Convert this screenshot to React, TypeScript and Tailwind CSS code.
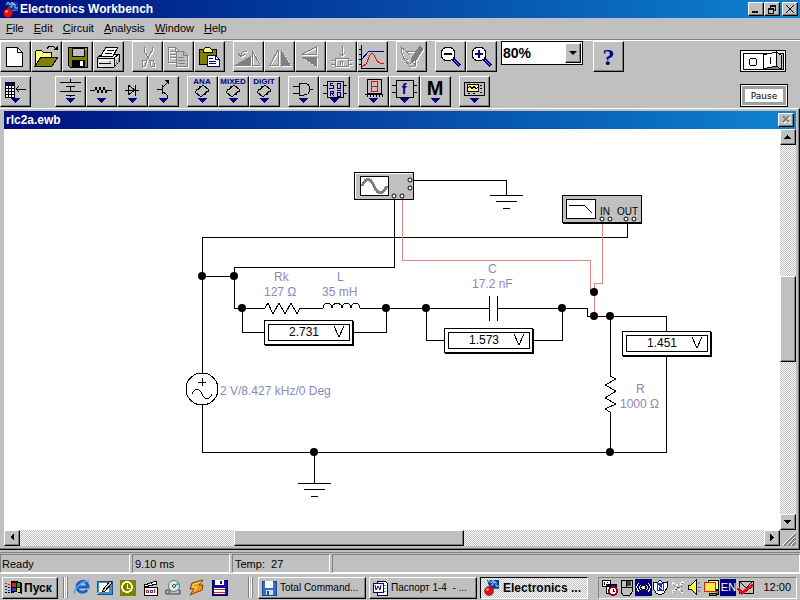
import type { ReactNode } from "react";
import { clsx } from "clsx";

const RAISED =
  "bg-[#c0c0c0] border border-t-white border-l-white border-r-black border-b-black shadow-[inset_-1px_-1px_0_#808080]";
const SUNKEN = "border border-t-[#808080] border-l-[#808080] border-r-white border-b-white";
const TITLE_BAR = "flex items-center bg-linear-to-r from-[#000c80] via-[#0848a4] to-[#1084d0] font-bold text-white";
const DITHER = "bg-[repeating-conic-gradient(#c0c0c0_0_25%,#ffffff_0_50%)] bg-size-[2px_2px]";

/* ---------- Icons ---------- */

function Icon({ children, size = 29, box = "1 1 29 29" }: { children: ReactNode; size?: number; box?: string }) {
  return (
    <svg
      width={size}
      height={size}
      viewBox={box}
      fill="none"
      stroke="#000"
      shapeRendering="crispEdges"
      aria-hidden="true"
      className="block shrink-0"
    >
      {children}
    </svg>
  );
}

const Drop = () => <path d="M10 22h10l-5 5z" fill="#000080" stroke="none" />;

// disabled glyphs are drawn twice: a white copy one pixel down-right, then the gray one
function Embossed({ children }: { children: ReactNode }) {
  return (
    <>
      <g transform="translate(1 1)" stroke="#fff" color="#fff">
        {children}
      </g>
      <g stroke="#808080" color="#808080">
        {children}
      </g>
    </>
  );
}

const AppLogo = ({ size }: { size: number }) => (
  <svg width={size} height={size} viewBox="0 0 17 17" fill="none" aria-hidden="true" className="block shrink-0">
    <path d="M4 1h12v9H7z" fill="#0a3a9c" />
    <path d="M4 4l2-3 2 3 2-3 2 3M8 6h2V3h3v4h3" stroke="#9cd0ff" />
    <path d="M6 7l4 3 5-1" stroke="#4878d8" />
    <circle cx="6" cy="12" r="4.5" fill="#e01010" stroke="#800000" strokeWidth="0.5" />
    <circle cx="4.5" cy="10.5" r="1.2" fill="#ffb0a0" />
  </svg>
);

const NewIcon = () => (
  <Icon>
    <path d="M6 6h11l5 5v14H6z" fill="#fff" />
    <path d="M17 6v5h5" />
  </Icon>
);

const OpenIcon = () => (
  <Icon>
    <path d="M4 25V11l2-2h4l2 2h8v5" fill="#ffff80" />
    <path d="M10 16h17l-6 9H4z" fill="#808000" />
    <path d="M16 8c2-4 7-4 9 1" />
    <path d="M22 9h5V5z" fill="#000" stroke="none" />
  </Icon>
);

const SaveIcon = () => (
  <Icon>
    <path d="M6 6h19v20H8l-2-2z" fill="#808000" />
    <path d="M10 7h12v8H10z" fill="#c0c0c0" />
    <path d="M10 19h12v7H10z" fill="#000" />
    <path d="M18 20h3v5h-3z" fill="#fff" stroke="none" />
    <path d="M23 8h1" stroke="#fff" />
  </Icon>
);

const PrintIcon = () => (
  <Icon>
    <path d="M4 17l5-4h17v8l-5 5H4z" fill="#e0e0e0" />
    <path d="M8 15l5-9h12l-5 9z" fill="#fff" />
    <path d="M14 9h7M12 12h7" />
    <path d="M4 17h17l5-4M21 17v9M6 22h12" />
    <path d="M6 19h13" stroke="#fff" />
    <path d="M23 19v5M25 17v5" stroke="#808080" />
    <path d="M16 20h2" stroke="#808000" />
  </Icon>
);

const CutIcon = () => (
  <Icon>
    <Embossed>
      <path d="M12 6v4l6 10M20 6v4l-6 10" />
      <path d="M11 19h3v3l-1 3h-3v-4zM18 19h3l1 3v3h-3l-1-3z" />
    </Embossed>
  </Icon>
);

const CopyIcon = () => (
  <Icon>
    <Embossed>
      <path d="M5 6h7l4 4v11H5zM12 6v4h4M7 10h4M7 13h6M7 16h6" />
      <path d="M13 10h7l4 4v11H13z" fill="#c0c0c0" />
      <path d="M20 10v4h4M15 16h6M15 19h7M15 22h7" />
    </Embossed>
  </Icon>
);

const PasteIcon = () => (
  <Icon>
    <path d="M5 8h17v15H5z" fill="#808000" />
    <path d="M9 11V9l3-3h3l3 3v2z" fill="#ffff80" />
    <path d="M13 14h8l4 4v7H13z" fill="#fff" stroke="#000080" />
    <path d="M21 14v4h4M15 17h4M15 20h7M15 22h7" stroke="#000080" />
  </Icon>
);

const RotateIcon = () => (
  <Icon>
    <Embossed>
      <path d="M3 24l14-8v8z" fill="currentColor" />
      <path d="M19 24V9l8 15zM14 10c-4 0-6 2-6 5M5 12l3 4 4-3" />
    </Embossed>
  </Icon>
);

const FlipHIcon = () => (
  <Icon>
    <Embossed>
      <path d="M6 24l8-15v15z" />
      <path d="M17 9v15h9z" fill="currentColor" />
    </Embossed>
  </Icon>
);

const FlipVIcon = () => (
  <Icon>
    <Embossed>
      <path d="M7 13l14-7v7z" />
      <path d="M7 16h14v9z" fill="currentColor" />
    </Embossed>
  </Icon>
);

const SubcircuitIcon = () => (
  <Icon>
    <Embossed>
      <path d="M16 5v10M13 12l3 3 3-3M9 17h13v8H9zM5 19h4M5 23h4M22 19h4M22 23h4M14 24l1-4h1l1 4" />
    </Embossed>
  </Icon>
);

const GraphIcon = () => (
  <Icon>
    <path d="M4 4v23h24M4 8H2M4 13H2M4 18H2M4 23H2M9 27v1M14 27v1M19 27v1M24 27v1" />
    <path d="M5 18l7-8h15" stroke="#000080" />
    <path d="M5 26l4-3 4-9 2-2 2 2 3 6 3 2h4" stroke="#ff0000" />
  </Icon>
);

const PropertiesIcon = () => (
  <Icon>
    <Embossed>
      <path d="M5 6l5 4h11l-2 15-4 1-7-8-2-6zM10 10l4 4M8 17l4 2" />
      <path d="M24 5l3 3-7 11-5 3 1-5z" fill="currentColor" />
      <path d="M17 22l3 2" />
    </Embossed>
  </Icon>
);

const ZoomIcon = ({ plus }: { plus?: boolean }) => (
  <Icon>
    <path d="M18 18l7 7" stroke="#000080" strokeWidth="4" />
    <path d="M19 19l5 5" stroke="#8080ff" />
    <circle cx="13" cy="13" r="7" fill="#fff" />
    <path d={plus ? "M9 13h8M13 9v8" : "M9 13h8"} stroke={plus ? "#000080" : "#000"} strokeWidth="2" />
  </Icon>
);

const PartsBinIcon = () => (
  <Icon>
    <path d="M5 6h9v15H5z" fill="#fff" />
    <path d="M8 6v15M11 6v15M5 9h9M5 12h9M5 15h9M5 18h9" />
    <path d="M5 6h9v3H5z" fill="#000080" />
    <path d="M16 13h10M19 10l-3 3 3 3" />
    <Drop />
  </Icon>
);

const BatteryIcon = () => (
  <Icon>
    <path d="M5 6h21M11 10h9M5 15h21M11 19h9M15 3v3M15 10v5M15 19v2" />
    <Drop />
  </Icon>
);

const ResistorIcon = () => (
  <Icon>
    <path d="M4 14h5l1-3 2 6 2-6 2 6 2-6 2 6 1-3h5" />
    <Drop />
  </Icon>
);

const DiodeIcon = () => (
  <Icon>
    <path d="M8 14h14M11 9v10l7-5zM18 9v11" />
    <Drop />
  </Icon>
);

const TransistorIcon = () => (
  <Icon>
    <path d="M9 13h5M14 9v9M14 12l6-6V4M14 15l5 4v3" />
    <path d="M16 4h5v5z" fill="#000" stroke="none" />
    <Drop />
  </Icon>
);

const ChipIcon = ({ label }: { label: string }) => (
  <Icon>
    <text
      x="15"
      y="8"
      textAnchor="middle"
      fill="#000080"
      stroke="none"
      className="font-['Liberation_Sans',sans-serif] text-[8px] font-bold"
    >
      {label}
    </text>
    <path d="M16 9l6 5-8 7-6-5z" />
    <path d="M13 11l-1-1M10 14l-1-1M18 18l1 1M21 15l1 1" />
    <Drop />
  </Icon>
);

const GateIcon = () => (
  <Icon>
    <path d="M11 7h5c4 0 6 3 6 6s-2 6-6 6h-5zM5 10h6M5 17h6M22 13h3" />
    <Drop />
  </Icon>
);

const FlipFlopIcon = () => (
  <Icon>
    <path d="M8 5h16v16H8zM4 9h4M4 17h4M24 9h4M24 17h4" />
    <path d="M14 7h-3v2h3v3h-4M11 20v-5h3v2h-3M13 18l2 2M18 7h3v5h-3zM18 16h3v4h-3zM18 14h4" stroke="#000080" />
    <Drop />
  </Icon>
);

const SevenSegIcon = () => (
  <Icon>
    <path d="M9 3h14v14H9z" fill="#c0c0c0" />
    <path d="M13 5h6v5h-6zM13 10h6v5h-6z" stroke="#ff0000" />
    <path d="M7 18h18M9 18v3M12 18v3M15 18v3M18 18v3M21 18v3M24 18v3" />
    <Drop />
  </Icon>
);

const FunctionIcon = () => (
  <Icon>
    <path d="M7 4h17v17H7zM3 9h4M3 16h4M24 9h4M24 16h4" />
    <text
      x="15"
      y="18"
      textAnchor="middle"
      fill="#000080"
      stroke="none"
      className="font-['Liberation_Sans',sans-serif] text-[14px] font-bold"
    >
      f
    </text>
    <Drop />
  </Icon>
);

const MiscIcon = () => (
  <Icon>
    <text
      x="15"
      y="19"
      textAnchor="middle"
      fill="#000"
      stroke="none"
      className="font-['Liberation_Sans',sans-serif] text-[20px] font-bold"
    >
      M
    </text>
    <Drop />
  </Icon>
);

const InstrumentIcon = () => (
  <Icon>
    <path d="M5 6h20v13H5z" fill="#c0c0c0" />
    <path d="M8 8h11v7H8z" fill="#ffff80" />
    <path d="M9 12l2-2 2 3 2-3 2 3 2-2" />
    <path d="M21 9h2M21 12h2M9 17h2M14 17h2M21 16h2" />
    <Drop />
  </Icon>
);

/* ---------- Toolbars ---------- */

interface Tool {
  name: string;
  icon: ReactNode;
  disabled?: boolean;
}

function ToolGroup({ tools }: { tools: Tool[] }) {
  return (
    <div className="flex">
      {tools.map((t) => (
        <button
          key={t.name}
          type="button"
          aria-label={t.name}
          disabled={t.disabled}
          className={clsx(RAISED, "h-[31px] w-[31px] shrink-0")}
        >
          {t.icon}
        </button>
      ))}
    </div>
  );
}

const FILE_TOOLS: Tool[] = [
  { name: "New", icon: <NewIcon /> },
  { name: "Open", icon: <OpenIcon /> },
  { name: "Save", icon: <SaveIcon /> },
  { name: "Print", icon: <PrintIcon /> },
];

const EDIT_TOOLS: Tool[] = [
  { name: "Cut", icon: <CutIcon />, disabled: true },
  { name: "Copy", icon: <CopyIcon />, disabled: true },
  { name: "Paste", icon: <PasteIcon /> },
];

const CIRCUIT_TOOLS: Tool[] = [
  { name: "Rotate", icon: <RotateIcon />, disabled: true },
  { name: "Flip horizontal", icon: <FlipHIcon />, disabled: true },
  { name: "Flip vertical", icon: <FlipVIcon />, disabled: true },
  { name: "Create subcircuit", icon: <SubcircuitIcon />, disabled: true },
  { name: "Display graphs", icon: <GraphIcon /> },
];

const PART_GROUPS: Tool[][] = [
  [
    { name: "Sources", icon: <BatteryIcon /> },
    { name: "Basic", icon: <ResistorIcon /> },
    { name: "Diodes", icon: <DiodeIcon /> },
    { name: "Transistors", icon: <TransistorIcon /> },
  ],
  [
    { name: "Analog ICs", icon: <ChipIcon label="ANA" /> },
    { name: "Mixed ICs", icon: <ChipIcon label="MIXED" /> },
    { name: "Digital ICs", icon: <ChipIcon label="DIGIT" /> },
  ],
  [
    { name: "Logic gates", icon: <GateIcon /> },
    { name: "Digital", icon: <FlipFlopIcon /> },
  ],
  [
    { name: "Indicators", icon: <SevenSegIcon /> },
    { name: "Controls", icon: <FunctionIcon /> },
    { name: "Miscellaneous", icon: <MiscIcon /> },
  ],
  [{ name: "Instruments", icon: <InstrumentIcon /> }],
];

function Toolbars() {
  return (
    <div className="flex justify-between border-t border-[#808080] pr-3 shadow-[inset_0_1px_0_#fff]">
      <div className="flex flex-col gap-1 pt-px">
        <div className="flex gap-2">
          <ToolGroup tools={FILE_TOOLS} />
          <ToolGroup tools={EDIT_TOOLS} />
          <ToolGroup tools={CIRCUIT_TOOLS} />
          <ToolGroup tools={[{ name: "Component properties", icon: <PropertiesIcon />, disabled: true }]} />
          <ToolGroup
            tools={[
              { name: "Zoom out", icon: <ZoomIcon /> },
              { name: "Zoom in", icon: <ZoomIcon plus /> },
            ]}
          />
          <div className="relative -ml-1 h-6 w-[82px]">
            <select
              aria-label="Zoom"
              className="h-6 w-full appearance-none border border-black bg-white pl-px text-[14px] leading-5 font-bold outline-none"
            >
              <option>80%</option>
            </select>
            <span
              className={clsx(RAISED, "pointer-events-none absolute top-[2px] right-[2px] flex h-5 w-4 items-center justify-center")}
            >
              <span className="border-x-4 border-t-4 border-x-transparent border-t-black" />
            </span>
          </div>
          <button
            type="button"
            aria-label="Help"
            className={clsx(
              RAISED,
              "ml-[2px] h-[31px] w-[31px] font-['Liberation_Serif',serif] text-[24px] leading-7 font-bold text-[#000080]"
            )}
          >
            ?
          </button>
        </div>
        <div className="flex gap-2">
          <div className="mr-4">
            <ToolGroup tools={[{ name: "Parts bin", icon: <PartsBinIcon /> }]} />
          </div>
          {PART_GROUPS.map((g) => (
            <ToolGroup key={g[0].name} tools={g} />
          ))}
        </div>
      </div>
      <div className="flex flex-col gap-3 pt-[10px]">
        <button type="button" aria-label="Power" className="h-[22px] w-[46px] border border-black bg-white">
          <svg
            width="44"
            height="20"
            viewBox="0 0 44 20"
            fill="none"
            stroke="#000"
            shapeRendering="crispEdges"
            aria-hidden="true"
          >
            <path d="M2 2h40v16H2z" fill="#c0c0c0" />
            <path d="M2 2h20v16H2z" fill="#fff" />
            <circle cx="12" cy="11" r="4" />
            <path d="M22 18V4l13-3v14z" fill="#fff" />
            <path d="M35 1l5 3v14l-5-3z" fill="#c0c0c0" />
            <path d="M22 18l13-3 5 3z" fill="#808080" />
            <path d="M29 6v7" />
          </svg>
        </button>
        <button
          type="button"
          className="h-[23px] w-12 border border-black bg-white shadow-[inset_0_0_0_1px_#fff,inset_0_0_0_4px_#a0a0a0] font-['DejaVu_Sans',sans-serif] text-[9px] leading-5"
        >
          Pause
        </button>
      </div>
    </div>
  );
}

/* ---------- Circuit ---------- */

const NODES = [
  [202, 276], [234, 276], [242, 308], [386, 308], [426, 308], [562, 308],
  [594, 292], [594, 316], [610, 316], [610, 452], [314, 452],
];

function Voltmeter({ x, y, value }: { x: number; y: number; value: string }) {
  return (
    <g transform={`translate(${x} ${y})`}>
      <path d="M0 0h88v24H0z" fill="#fff" />
      <path d="M89 1v24H1" />
      <path d="M4 4h81v16H4z" fill="#fff" />
      <text x="25" y="16" fill="#000" stroke="none">
        {value}
      </text>
      <path d="M70 6l5 11 5-11" />
    </g>
  );
}

function Ground({ x, y }: { x: number; y: number }) {
  return <path d={`M${x - 16} ${y}h33M${x - 10} ${y + 6}h21M${x - 3} ${y + 13}h7`} />;
}

function Circuit() {
  return (
    <svg
      width="776"
      height="401"
      viewBox="4 129 776 401"
      fill="none"
      stroke="#000"
      shapeRendering="crispEdges"
      role="img"
      aria-label="RLC circuit"
      className="block shrink-0 font-['Liberation_Sans',sans-serif] text-[12px]"
    >
      {/* Wires */}
      <path d="M202 374V237H627V222M202 276H234M394 197V267H234V308H265M300 308H323M360 308H489M497 308H587V316H666V332" />
      <path d="M242 308V332H264M352 332H386V308M426 308V340H444M532 340H562V308" />
      <path d="M610 316V376M610 412V452M666 355V452H202V404M314 452V483M413 180H506V195" />
      <path d="M402 197V260H590V292M602 222V283H594V316" stroke="#e08888" />
      <Ground x={506} y={195} />
      <Ground x={314} y={483} />

      {/* R, L, C */}
      <path d="M265 308l3-5 5 11 6-11 6 11 6-11 6 11 3-6" />
      <path d="M323 308c0-6 9-6 9 0c0-6 10-6 10 0c0-6 9-6 9 0c0-6 9-6 9 0" />
      <path d="M489 296v25M497 296v25" />
      <path d="M610 376l6 3-11 6 11 6-11 7 11 6-11 5 5 3" />

      {/* AC source */}
      <circle cx="202" cy="389" r="16" fill="#fff" />
      <path d="M198 382h8M202 378v8M192 394c3-6 7-6 10 0s7 6 10 0" />

      {/* Oscilloscope */}
      <path d="M354 172h59v27h-59z" fill="#c0c0c0" />
      <path d="M355 173v25M355 173h57" stroke="#fff" />
      <path d="M360 176h28v19h-28z" fill="#fff" />
      <path d="M362 186c4-9 8-9 12 0s8 9 13 0" stroke="#808080" strokeWidth="3" />

      {/* Bode plotter */}
      <path d="M562 195h79v27h-79z" fill="#c0c0c0" />
      <path d="M641 196v27h-78" />
      <path d="M566 199h29v19h-29z" fill="#fff" />
      <path d="M569 205h15l8 8" />
      <g fill="#000" stroke="none" className="text-[10px]">
        <text x="600" y="215">IN</text>
        <text x="617" y="215">OUT</text>
      </g>
      {[[410, 180], [410, 188], [394, 196], [402, 196], [602, 219], [610, 219], [626, 219], [634, 219]].map(([x, y]) => (
        <circle key={`${x}-${y}`} cx={x} cy={y} r="2" fill="#fff" shapeRendering="auto" />
      ))}

      <Voltmeter x={264} y={320} value="2.731" />
      <Voltmeter x={444} y={328} value="1.573" />
      <Voltmeter x={622} y={331} value="1.451" />

      {NODES.map(([x, y]) => (
        <circle key={`${x}-${y}`} cx={x} cy={y} r="4" fill="#000" stroke="none" shapeRendering="auto" />
      ))}

      {/* Labels */}
      <g fill="#8888bb" stroke="none">
        <text x="274" y="281">Rk</text>
        <text x="264" y="296">127 Ω</text>
        <text x="337" y="281">L</text>
        <text x="322" y="296">35 mH</text>
        <text x="488" y="273">C</text>
        <text x="472" y="288">17.2 nF</text>
        <text x="636" y="393">R</text>
        <text x="620" y="408">1000 Ω</text>
        <text x="220" y="395">2 V/8.427 kHz/0 Deg</text>
      </g>
    </svg>
  );
}

function ScrollButton({ label, arrow }: { label: string; arrow: string }) {
  return (
    <button type="button" aria-label={label} className={clsx(RAISED, "h-4 w-4 shrink-0")}>
      <svg width="14" height="14" viewBox="0 0 14 14" shapeRendering="crispEdges" aria-hidden="true">
        <path d={arrow} />
      </svg>
    </button>
  );
}

function CircuitWindow() {
  return (
    <section className="mt-px flex min-h-0 flex-1 flex-col border-t border-r border-b border-t-white border-r-black border-b-black pt-[2px] pr-[3px] pb-[3px] pl-1 shadow-[inset_-1px_-1px_0_#808080]">
      <header className={clsx(TITLE_BAR, "h-[18px] shrink-0 justify-between pr-[2px] pl-[2px]")}>
        <h2>rlc2a.ewb</h2>
        <button type="button" aria-label="Close circuit" className={clsx(RAISED, "h-[14px] w-4")}>
          <svg width="14" height="12" viewBox="0 0 14 12" fill="none" strokeWidth="2" aria-hidden="true">
            <path d="M5 3l6 6M11 3l-6 6" stroke="#fff" />
            <path d="M4 2l6 6M10 2l-6 6" stroke="#808080" />
          </svg>
        </button>
      </header>
      <div className="flex min-h-0 flex-1">
        <div className="min-w-0 flex-1 overflow-hidden bg-white">
          <Circuit />
        </div>
        <div className={clsx(DITHER, "flex w-4 shrink-0 flex-col")}>
          <ScrollButton label="Scroll up" arrow="M3 9h7L6 5z" />
          <div className="grow-[132] basis-0" />
          <div className={clsx(RAISED, "grow-[84] basis-0")} />
          <div className="grow-[153] basis-0" />
          <ScrollButton label="Scroll down" arrow="M3 5h7L6 9z" />
        </div>
      </div>
      <div className="flex h-4 shrink-0">
        <div className={clsx(DITHER, "flex min-w-0 flex-1")}>
          <ScrollButton label="Scroll left" arrow="M9 3v7L5 6z" />
          <div className="grow-[215] basis-0" />
          <div className={clsx(RAISED, "grow-[228] basis-0")} />
          <div className="grow-[301] basis-0" />
          <ScrollButton label="Scroll right" arrow="M5 3v7l4-4z" />
        </div>
        <svg width="16" height="16" viewBox="0 0 16 16" stroke="#808080" strokeWidth="2" aria-hidden="true">
          <path d="M4 16L16 4M8 16l8-8M12 16l4-4" />
          <path d="M3 15L15 3M7 15l8-8M11 15l4-4" stroke="#fff" strokeWidth="1" />
        </svg>
      </div>
    </section>
  );
}

/* ---------- Taskbar ---------- */

const WindowsFlag = () => (
  <Icon size={17} box="0 0 17 17">
    <path d="M6 3l4-1 6 2v10l-5-2-5 2z" fill="#000" />
    <path d="M7 4h4v4H7z" fill="#e02020" stroke="none" />
    <path d="M12 4h3v4h-3z" fill="#20a020" stroke="none" />
    <path d="M7 9h4v3H7z" fill="#2040e0" stroke="none" />
    <path d="M12 9h3v4h-3z" fill="#f0e020" stroke="none" />
    <path d="M0 4h2M3 5h2" stroke="#e02020" />
    <path d="M0 7h2M3 8h2M0 13h2M3 13h2" />
    <path d="M0 10h2M3 11h2" stroke="#2040e0" />
  </Icon>
);

const QUICK_LAUNCH: Tool[] = [
  {
    name: "Internet Explorer",
    icon: (
      <svg width="17" height="17" viewBox="0 0 17 17" fill="none" aria-hidden="true">
        <path d="M14 11a5.5 5.5 0 1 1 1-3H5" stroke="#1860c8" strokeWidth="3" />
        <path d="M2 15C-1 12 9 1 16 2" stroke="#58a8f0" strokeWidth="1.5" />
      </svg>
    ),
  },
  {
    name: "Show desktop",
    icon: (
      <Icon size={17} box="0 0 17 17">
        <path d="M1 2h15v13H1z" fill="#3890d0" stroke="#205080" />
        <path d="M3 4h10v9H3z" fill="#fff" stroke="none" />
        <path d="M6 12l8-10 2 2-8 9z" fill="#f0d080" />
        <path d="M1 15l5-5" stroke="#fff" />
      </Icon>
    ),
  },
  {
    name: "Clock",
    icon: (
      <Icon size={17} box="0 0 17 17">
        <path d="M1 1h15v15H1z" fill="#808000" stroke="#808000" />
        <circle cx="8" cy="8" r="5" fill="#808000" stroke="#ffffc0" strokeWidth="2" />
        <path d="M8 5v4h3" stroke="#fff" />
      </Icon>
    ),
  },
  {
    name: "Media player",
    icon: (
      <Icon size={17} box="0 0 17 17">
        <path d="M2 8h13v8H2z" fill="#fff" />
        <path d="M2 6l12-4 1 3-12 3z" fill="#fff" />
        <path d="M5 5l2 2M9 4l2 2" />
        <path d="M4 11h2v2H4z" stroke="#e02020" />
        <path d="M8 11h2v2H8z" stroke="#2040e0" />
        <path d="M12 10v4" stroke="#e02020" />
      </Icon>
    ),
  },
  {
    name: "CD player",
    icon: (
      <svg width="17" height="17" viewBox="0 0 17 17" fill="none" aria-hidden="true">
        <path d="M1 11h14v4H1z" fill="#c0c0c0" stroke="#404040" />
        <circle cx="9" cy="7" r="5.5" fill="#e0e8e8" stroke="#607878" />
        <path d="M9 7l4-4 1 3z" fill="#40b0a0" />
        <circle cx="9" cy="7" r="1.5" fill="#fff" stroke="#404040" />
        <path d="M3 13h3" stroke="#008000" />
      </svg>
    ),
  },
  {
    name: "Winamp",
    icon: (
      <svg width="17" height="17" viewBox="0 0 17 17" aria-hidden="true">
        <path d="M15 1L4 4l-2 6h4l-4 6 12-5 1-5h-4z" fill="#f09818" stroke="#804000" />
        <path d="M13 3L6 5 4 8h5l-3 4" fill="none" stroke="#ffe080" />
      </svg>
    ),
  },
  {
    name: "Total Commander",
    icon: (
      <Icon size={17} box="0 0 17 17">
        <path d="M1 1h15v15H1z" fill="#1010a0" stroke="#000060" />
        <path d="M4 1h9v5H4z" fill="#fff" stroke="none" />
        <path d="M9 2h2v3H9z" fill="#1010a0" stroke="none" />
        <path d="M3 9h11v6H3z" fill="#fff" stroke="none" />
        <path d="M3 10h11M3 13h11" stroke="#e02020" />
      </Icon>
    ),
  },
];

const FloppyIcon = () => (
  <Icon size={16} box="0 0 16 16">
    <path d="M1 1h14v14H1z" fill="#3070c8" stroke="#184890" />
    <path d="M4 1h8v7H4z" fill="#fff" stroke="none" />
    <path d="M5 10h7v5H5z" fill="#d0e0f0" stroke="none" />
    <path d="M6 11h2v4H6z" fill="#184890" stroke="none" />
  </Icon>
);

const WordIcon = () => (
  <Icon size={16} box="0 0 16 16">
    <path d="M5 1h8l2 2v12H5z" fill="#fff" />
    <path d="M11 5h3M11 8h3M11 11h3" stroke="#808080" />
    <path d="M1 3h10v9H1z" fill="#fff" stroke="#000080" />
    <path d="M3 5l1 5 2-4 2 4 1-5" stroke="#000080" shapeRendering="auto" />
  </Icon>
);

const TRAY: Tool[] = [
  {
    name: "Task scheduler",
    icon: (
      <Icon size={17} box="0 0 17 17">
        <path d="M1 1h8v6H1zM5 5h10v9H5z" fill="#fff" />
        <path d="M5 5h10v2H5z" fill="#000080" />
        <path d="M3 3v3M6 3v1" stroke="#000080" />
        <circle cx="12" cy="12" r="4" fill="#fff" stroke="#a00020" strokeWidth="2" />
        <path d="M12 10v2h2" />
      </Icon>
    ),
  },
  {
    name: "Mouse",
    icon: (
      <Icon size={17} box="0 0 17 17">
        <path d="M3 1h11v12l-2 3H5l-2-3zM3 8h11M8 1v7" fill="#c0c0c0" />
        <path d="M9 2h4v5H9z" fill="#404040" stroke="none" />
      </Icon>
    ),
  },
  {
    name: "Network",
    icon: (
      <Icon size={17} box="0 0 17 17">
        <path d="M0 0h17v17H0z" fill="#000080" stroke="none" />
        <path d="M4 4c-3 2-3 6 0 9M13 4c3 2 3 6 0 9" stroke="#fff" />
        <path d="M6 6c-2 2-2 3 0 5M11 6c2 2 2 3 0 5" stroke="#ffff40" />
        <circle cx="8.5" cy="8.5" r="2" fill="#ffff40" stroke="none" />
      </Icon>
    ),
  },
  {
    name: "Antivirus",
    icon: (
      <Icon size={17} box="0 0 17 17">
        <path d="M2 3l3 1 3-3 3 3 4-1v6l-3 5-4 2-4-2-3-5z" fill="#fff" />
        <path d="M5 4h7v8H5z" fill="#1830d0" stroke="none" />
        <path d="M6 11V6l4 4V5" stroke="#fff" />
      </Icon>
    ),
  },
  {
    name: "Monitor",
    icon: (
      <Icon size={17} box="0 0 17 17">
        <path d="M3 4l3 2M11 6l3-3M3 13l4-3M10 10l4 4M8 5v2" stroke="#fff" strokeWidth="2" />
        <path d="M4 5l2 2M11 11l3 2M12 5l2-1M4 12l1 1" stroke="#808080" />
        <path d="M8 8h3M6 10h2M12 7h1" stroke="#c02020" />
      </Icon>
    ),
  },
  {
    name: "Volume",
    icon: (
      <Icon size={17} box="0 0 17 17">
        <path d="M2 6h3l5-5v14l-5-5H2z" fill="#ffff40" />
        <path d="M12 5l2-2M12 8h3M12 11l2 2" stroke="#606060" />
      </Icon>
    ),
  },
  {
    name: "Computers",
    icon: (
      <Icon size={17} box="0 0 17 17">
        <path d="M5 1h10v9H5z" fill="#ffff80" />
        <path d="M1 3h11v9H1z" fill="#ffe840" stroke="#d02020" />
        <path d="M6 14h7v2H6zM13 11h2v4h-2" fill="#808000" />
      </Icon>
    ),
  },
];

const Gripper = () => (
  <div className="flex h-[21px] gap-px">
    <span className="w-[2px] border-l border-l-[#808080] bg-white" />
    <span className="w-[2px] border-r border-r-[#808080] bg-white" />
  </div>
);

function TaskButton({ icon, active, children }: { icon: ReactNode; active?: boolean; children: ReactNode }) {
  return (
    <button
      type="button"
      aria-pressed={active}
      className={clsx(
        "flex h-[22px] w-[108px] items-center gap-[3px] pl-[2px] whitespace-nowrap",
        active
          ? clsx(DITHER, "border border-t-black border-l-black border-r-white border-b-white text-[12px] font-bold")
          : clsx(RAISED, "text-[10px]")
      )}
    >
      {icon}
      {children}
    </button>
  );
}

function Taskbar() {
  return (
    <footer className="flex h-[27px] shrink-0 items-center border-t border-white pt-px pr-[3px] pl-[2px]">
      <button type="button" className={clsx(RAISED, "flex h-[22px] w-14 items-center gap-[2px] pl-[2px] text-[12px] font-bold")}>
        <WindowsFlag />
        Пуск
      </button>
      <div className="ml-[5px]">
        <Gripper />
      </div>
      <div className="ml-[5px] flex gap-[6px]">
        {QUICK_LAUNCH.map((q) => (
          <button key={q.name} type="button" aria-label={q.name}>
            {q.icon}
          </button>
        ))}
      </div>
      <div className="ml-5">
        <Gripper />
      </div>
      <div className="ml-[5px] flex min-w-0 flex-1 gap-[3px]">
        <TaskButton icon={<FloppyIcon />}>Total Command...</TaskButton>
        <TaskButton icon={<WordIcon />}>Паспорт 1-4 &nbsp;- ...</TaskButton>
        <TaskButton active icon={<AppLogo size={17} />}>
          Electronics ...
        </TaskButton>
      </div>
      <div className={clsx(SUNKEN, "flex h-[22px] items-center pr-[5px] pl-[2px]")}>
        {TRAY.map((t) => (
          <button key={t.name} type="button" aria-label={t.name}>
            {t.icon}
          </button>
        ))}
        <span className="h-[17px] w-4 bg-[#000080] text-center text-[11px] leading-[17px] text-white">EN</span>
        <button type="button" aria-label="Mail" className="ml-px">
          <Icon size={17} box="0 0 17 17">
            <path d="M2 2h14v12H2zM2 2l7 7 7-7" fill="#c0c0c0" />
            <path d="M1 9l4 5L16 6" stroke="#e01010" strokeWidth="3" />
          </Icon>
        </button>
        <time className="ml-[9px] text-[11px]">12:00</time>
      </div>
    </footer>
  );
}

/* ---------- Main window ---------- */

const MENUS = ["File", "Edit", "Circuit", "Analysis", "Window", "Help"];

const WINDOW_BUTTONS = [
  { name: "Minimize", path: "M3 10h6M3 9h6", gap: false },
  { name: "Restore", path: "M5 6V3h6v5H9M5 4h6M3 6h6v5H3zM3 7h6", gap: false },
  { name: "Close", path: "M3 3l7 7M4 3l7 7M10 3l-7 7M11 3l-7 7", gap: true },
];

export default function App() {
  return (
    <div className="flex h-screen flex-col overflow-hidden bg-[#c0c0c0] font-['Liberation_Sans',sans-serif] text-[12px] text-black">
      <header className={clsx(TITLE_BAR, "h-[18px] shrink-0 pr-[2px] pl-[2px]")}>
        <AppLogo size={17} />
        <h1 className="ml-px flex-1">Electronics Workbench</h1>
        {WINDOW_BUTTONS.map((b) => (
          <button
            key={b.name}
            type="button"
            aria-label={b.name}
            className={clsx(RAISED, "h-[14px] w-4", b.gap && "ml-[2px]")}
          >
            <svg
              width="14"
              height="12"
              viewBox="0 0 14 13"
              fill="none"
              stroke="#000"
              shapeRendering="crispEdges"
              aria-hidden="true"
            >
              <path d={b.path} />
            </svg>
          </button>
        ))}
      </header>
      <nav className="flex h-[21px] shrink-0 items-center gap-[10px] pl-[6px] text-[11px]">
        {MENUS.map((m) => (
          <button key={m} type="button">
            <u>{m[0]}</u>
            {m.slice(1)}
          </button>
        ))}
      </nav>
      <Toolbars />
      <CircuitWindow />
      <div className="mt-[2px] flex h-[21px] shrink-0 gap-[2px] border-t border-[#808080] pt-px text-[11px] leading-[18px]">
        <div className={clsx(SUNKEN, "w-[130px] pl-px")}>Ready</div>
        <div className={clsx(SUNKEN, "w-[98px] pl-[2px]")}>9.10 ms</div>
        <div className={clsx(SUNKEN, "w-[98px] pl-[2px]")}>Temp: &nbsp;27</div>
        <div className={clsx(SUNKEN, "flex-1")} />
      </div>
      <Taskbar />
    </div>
  );
}
